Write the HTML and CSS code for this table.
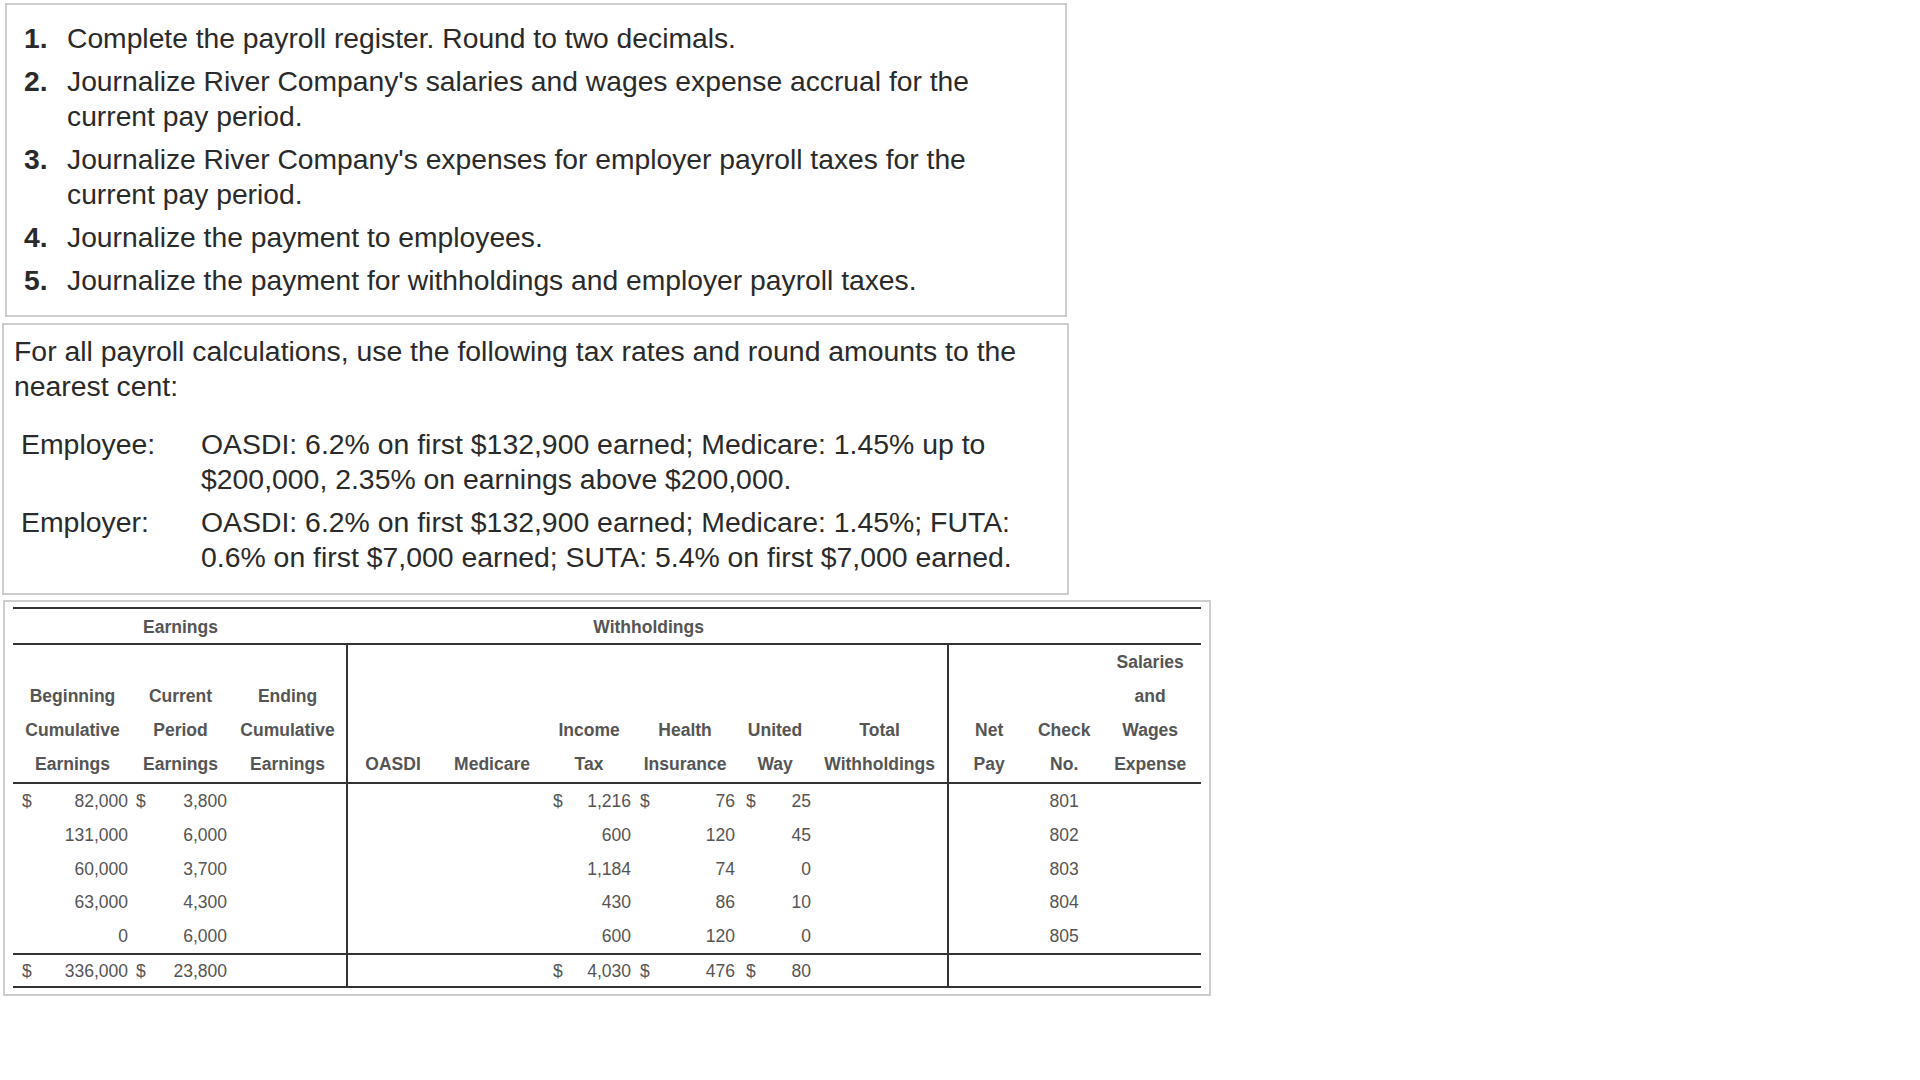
FILE: index.html
```html
<!DOCTYPE html>
<html lang="en">
<head>
<meta charset="utf-8">
<title>Payroll register</title>
<link rel="stylesheet" href="styles.css">
</head>
<body>
<div class="box tasks">
  <ol class="task-list">
    <li><span class="num">1.</span><span class="txt">Complete the payroll register. Round to two decimals.</span></li>
    <li><span class="num">2.</span><span class="txt">Journalize River Company's salaries and wages expense accrual for the<br>current pay period.</span></li>
    <li><span class="num">3.</span><span class="txt">Journalize River Company's expenses for employer payroll taxes for the<br>current pay period.</span></li>
    <li><span class="num">4.</span><span class="txt">Journalize the payment to employees.</span></li>
    <li><span class="num">5.</span><span class="txt">Journalize the payment for withholdings and employer payroll taxes.</span></li>
  </ol>
</div>
<div class="box rates">
  <p class="intro">For all payroll calculations, use the following tax rates and round amounts to the<br>nearest cent:</p>
  <div class="rate-list">
    <div class="rate-row"><span class="label">Employee:</span><span class="desc">OASDI: 6.2% on first $132,900 earned; Medicare: 1.45% up to<br>$200,000, 2.35% on earnings above $200,000.</span></div>
    <div class="rate-row"><span class="label">Employer:</span><span class="desc">OASDI: 6.2% on first $132,900 earned; Medicare: 1.45%; FUTA:<br>0.6% on first $7,000 earned; SUTA: 5.4% on first $7,000 earned.</span></div>
  </div>
</div>
<div class="box register">
  <table class="reg">
    <colgroup>
      <col style="width:30px"><col style="width:89px">
      <col style="width:16px"><col style="width:81px">
      <col style="width:119px">
      <col style="width:90px"><col style="width:108px">
      <col style="width:24px"><col style="width:62px">
      <col style="width:28px"><col style="width:78px">
      <col style="width:22px"><col style="width:52px">
      <col style="width:137px">
      <col style="width:80px"><col style="width:70px"><col style="width:102px">
    </colgroup>
    <thead>
      <tr class="group">
        <th colspan="5">Earnings</th>
        <th colspan="9">Withholdings</th>
        <th colspan="3"></th>
      </tr>
      <tr class="cols">
        <th colspan="2">Beginning<br>Cumulative<br>Earnings</th>
        <th colspan="2">Current<br>Period<br>Earnings</th>
        <th class="vr">Ending<br>Cumulative<br>Earnings</th>
        <th>OASDI</th>
        <th>Medicare</th>
        <th colspan="2">Income<br>Tax</th>
        <th colspan="2">Health<br>Insurance</th>
        <th colspan="2">United<br>Way</th>
        <th class="vr">Total<br>Withholdings</th>
        <th>Net<br>Pay</th>
        <th>Check<br>No.</th>
        <th class="sal">Salaries<br>and<br>Wages<br>Expense</th>
      </tr>
    </thead>
    <tbody>
      <tr>
        <td class="d1">$</td><td class="n1">82,000</td>
        <td class="d2">$</td><td class="n2">3,800</td>
        <td class="vr"></td><td></td><td></td>
        <td class="d3">$</td><td class="n3">1,216</td>
        <td class="d4">$</td><td class="n4">76</td>
        <td class="d5">$</td><td class="n5">25</td>
        <td class="vr"></td><td></td><td class="chk">801</td><td></td>
      </tr>
      <tr>
        <td></td><td class="n1">131,000</td>
        <td></td><td class="n2">6,000</td>
        <td class="vr"></td><td></td><td></td>
        <td></td><td class="n3">600</td>
        <td></td><td class="n4">120</td>
        <td></td><td class="n5">45</td>
        <td class="vr"></td><td></td><td class="chk">802</td><td></td>
      </tr>
      <tr>
        <td></td><td class="n1">60,000</td>
        <td></td><td class="n2">3,700</td>
        <td class="vr"></td><td></td><td></td>
        <td></td><td class="n3">1,184</td>
        <td></td><td class="n4">74</td>
        <td></td><td class="n5">0</td>
        <td class="vr"></td><td></td><td class="chk">803</td><td></td>
      </tr>
      <tr>
        <td></td><td class="n1">63,000</td>
        <td></td><td class="n2">4,300</td>
        <td class="vr"></td><td></td><td></td>
        <td></td><td class="n3">430</td>
        <td></td><td class="n4">86</td>
        <td></td><td class="n5">10</td>
        <td class="vr"></td><td></td><td class="chk">804</td><td></td>
      </tr>
      <tr class="last">
        <td></td><td class="n1">0</td>
        <td></td><td class="n2">6,000</td>
        <td class="vr"></td><td></td><td></td>
        <td></td><td class="n3">600</td>
        <td></td><td class="n4">120</td>
        <td></td><td class="n5">0</td>
        <td class="vr"></td><td></td><td class="chk">805</td><td></td>
      </tr>
    </tbody>
    <tfoot>
      <tr class="total">
        <td class="d1">$</td><td class="n1">336,000</td>
        <td class="d2">$</td><td class="n2">23,800</td>
        <td class="vr"></td><td></td><td></td>
        <td class="d3">$</td><td class="n3">4,030</td>
        <td class="d4">$</td><td class="n4">476</td>
        <td class="d5">$</td><td class="n5">80</td>
        <td class="vr"></td><td></td><td></td><td></td>
      </tr>
    </tfoot>
  </table>
</div>
</body>
</html>
```
FILE: styles.css
```css
html, body {
  margin: 0;
  padding: 0;
  background: #ffffff;
}

body {
  font-family: "Liberation Sans", Arial, sans-serif;
  color: #2a2a2a;
  padding-top: 3px;
}

.box {
  border: 2px solid #cdcdcd;
  box-sizing: border-box;
  background: #ffffff;
}

/* ---- task list ---- */
.tasks {
  margin-left: 5px;
  width: 1062px;
  padding: 16px 10px 17px 17px;
}

.task-list {
  list-style: none;
  margin: 0;
  padding: 0;
  display: flex;
  flex-direction: column;
  gap: 8px;
}

.task-list li {
  display: flex;
  font-size: 28.25px;
  line-height: 35px;
}

.task-list .num {
  flex: 0 0 43px;
  font-weight: bold;
}

/* ---- tax rates ---- */
.rates {
  margin-top: 6px;
  margin-left: 2px;
  width: 1067px;
  padding: 9px 8px 18px 10px;
  font-size: 28.4px;
  line-height: 35px;
}

.intro {
  margin: 0 0 23px 0;
}

.rate-list {
  display: flex;
  flex-direction: column;
  gap: 8px;
  padding-left: 7px;
}

.rate-row {
  display: flex;
}

.rate-row .label {
  flex: 0 0 180px;
}

/* ---- payroll register ---- */
.register {
  margin-top: 5px;
  margin-left: 3px;
  width: 1208px;
  padding: 5px 8px 6px 8px;
}

.reg {
  table-layout: fixed;
  width: 1188px;
  border-collapse: separate;
  border-spacing: 0;
  border-top: 2px solid #333333;
  border-bottom: 2px solid #333333;
  font-size: 17.5px;
  color: #555555;
}

.reg th,
.reg td {
  padding: 0;
  white-space: nowrap;
  overflow: visible;
}

.reg th {
  font-weight: bold;
  text-align: center;
  vertical-align: bottom;
}

.reg .group th {
  padding-top: 2px;
  line-height: 32px;
  border-bottom: 2px solid #333333;
}

.reg .cols th {
  height: 135px;
  padding-bottom: 1px;
  line-height: 34px;
  border-bottom: 2px solid #333333;
}

.reg td {
  padding-top: 2px;
  line-height: 31.8px;
}

.reg tr.last td {
  border-bottom: 2px solid #333333;
}

.reg tr.total td {
  padding-top: 2px;
  line-height: 29px;
}

.reg .vr {
  border-right: 2px solid #333333;
}

.reg .d1 { text-align: left; padding-left: 9px; }
.reg .d2 { text-align: left; padding-left: 4px; }
.reg .d3 { text-align: left; padding-left: 7px; }
.reg .d4 { text-align: left; padding-left: 8px; }
.reg .d5 { text-align: left; padding-left: 8px; }

.reg .n1 { text-align: right; padding-right: 4px; }
.reg .n2 { text-align: right; padding-right: 2px; }
.reg .n3 { text-align: right; padding-right: 1px; }
.reg .n4 { text-align: right; padding-right: 3px; }
.reg .n5 { text-align: right; padding-right: 1px; }

.reg .chk { text-align: center; }
```
